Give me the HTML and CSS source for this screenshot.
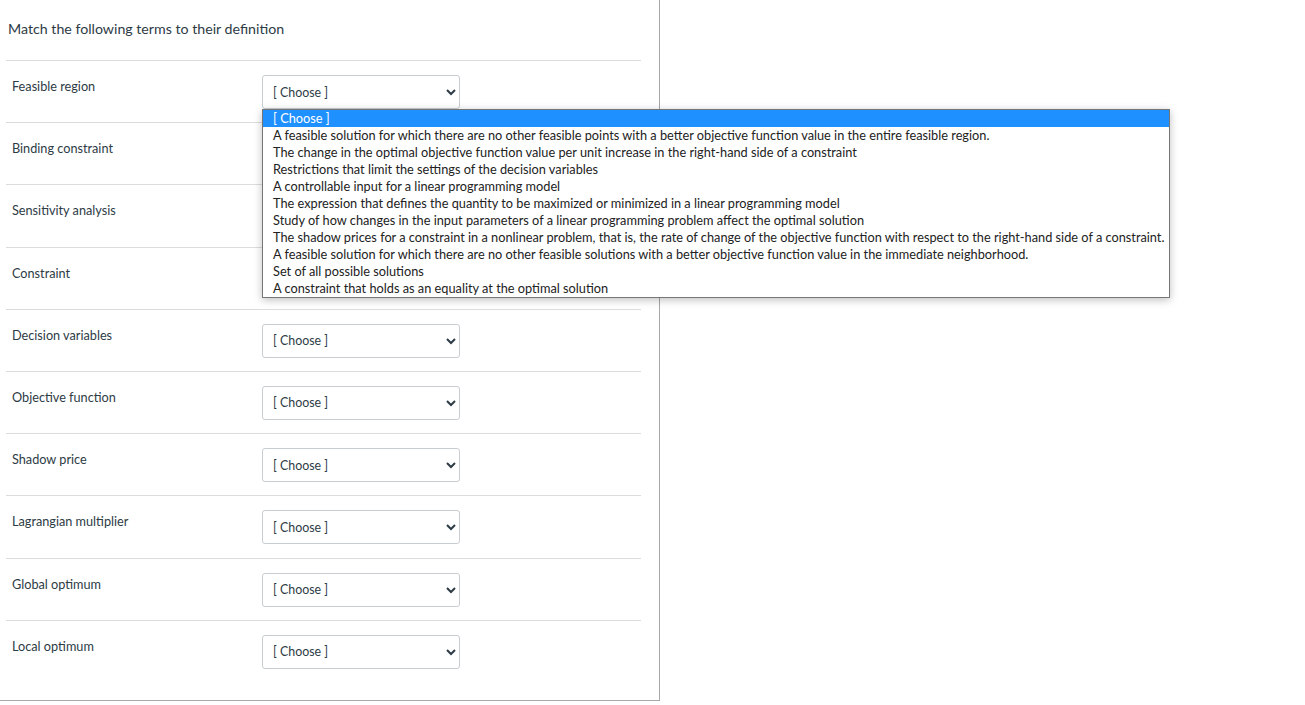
FILE: index.html
```html
<!DOCTYPE html>
<html lang="en">
<head>
    <meta charset="UTF-8">
    <meta name="viewport" content="width=device-width, initial-scale=1.0">
    <title>Matching Question</title>
    <link rel="stylesheet" href="styles.css">
</head>
<body>
    <div class="question">
        <div class="question-text">Match the following terms to their definition</div>

        <div class="answers">
            <div class="answer">
                <label class="term">Feasible region</label>
                <div class="picker">
                    <select class="choice"><option>[ Choose ]</option></select>
                </div>
            </div>
            <div class="answer">
                <label class="term">Binding constraint</label>
                <div class="picker">
                    <select class="choice"><option>[ Choose ]</option></select>
                </div>
            </div>
            <div class="answer">
                <label class="term">Sensitivity analysis</label>
                <div class="picker">
                    <select class="choice"><option>[ Choose ]</option></select>
                </div>
            </div>
            <div class="answer">
                <label class="term">Constraint</label>
                <div class="picker">
                    <select class="choice"><option>[ Choose ]</option></select>
                </div>
            </div>
            <div class="answer">
                <label class="term">Decision variables</label>
                <div class="picker">
                    <select class="choice"><option>[ Choose ]</option></select>
                </div>
            </div>
            <div class="answer">
                <label class="term">Objective function</label>
                <div class="picker">
                    <select class="choice"><option>[ Choose ]</option></select>
                </div>
            </div>
            <div class="answer">
                <label class="term">Shadow price</label>
                <div class="picker">
                    <select class="choice"><option>[ Choose ]</option></select>
                </div>
            </div>
            <div class="answer">
                <label class="term">Lagrangian multiplier</label>
                <div class="picker">
                    <select class="choice"><option>[ Choose ]</option></select>
                </div>
            </div>
            <div class="answer">
                <label class="term">Global optimum</label>
                <div class="picker">
                    <select class="choice"><option>[ Choose ]</option></select>
                </div>
            </div>
            <div class="answer">
                <label class="term">Local optimum</label>
                <div class="picker">
                    <select class="choice"><option>[ Choose ]</option></select>
                </div>
            </div>
        </div>
    </div>

    <!-- open list of the first dropdown -->
    <ul class="option-list">
        <li class="option selected">[ Choose ]</li>
        <li class="option">A feasible solution for which there are no other feasible points with a better objective function value in the entire feasible region.</li>
        <li class="option">The change in the optimal objective function value per unit increase in the right-hand side of a constraint</li>
        <li class="option">Restrictions that limit the settings of the decision variables</li>
        <li class="option">A controllable input for a linear programming model</li>
        <li class="option">The expression that defines the quantity to be maximized or minimized in a linear programming model</li>
        <li class="option">Study of how changes in the input parameters of a linear programming problem affect the optimal solution</li>
        <li class="option">The shadow prices for a constraint in a nonlinear problem, that is, the rate of change of the objective function with respect to the right-hand side of a constraint.</li>
        <li class="option">A feasible solution for which there are no other feasible solutions with a better objective function value in the immediate neighborhood.</li>
        <li class="option">Set of all possible solutions</li>
        <li class="option">A constraint that holds as an equality at the optimal solution</li>
    </ul>
</body>
</html>
```

FILE: styles.css
```css
body {
    margin: 0;
    font-family: Lato, "Liberation Sans", sans-serif;
    color: #2d3b45;
    background: #fff;
}

.question {
    box-sizing: border-box;
    width: 660px;
    height: 701px;
    border-right: 1px solid #a8a8a8;
    border-bottom: 1px solid #a8a8a8;
    padding: 0 18px 0 6px;
}

.question-text {
    font-size: 14.2px;
    line-height: 20px;
    padding: 19px 2px 21px;
}

.answer {
    display: flex;
    border-top: 1px solid #dcdcdc;
    padding: 14px 6px 13.2px;
}

.term {
    width: 250px;
    font-size: 12.7px;
    line-height: 18px;
    padding-top: 2px;
}

.choice {
    box-sizing: border-box;
    width: 198px;
    height: 34px;
    padding: 0 6px;
    font-family: Lato, "Liberation Sans", sans-serif;
    font-size: 12.4px;
    color: #2d3b45;
    background: #fff;
    border: 1px solid #c7cdd1;
    border-radius: 3px;
}

.option-list {
    position: absolute;
    left: 262px;
    top: 109px;
    box-sizing: border-box;
    width: 908px;
    height: 189px;
    margin: 0;
    padding: 0;
    list-style: none;
    background: #fff;
    border: 1px solid #767676;
    box-shadow: 0 2px 8px rgba(0, 0, 0, 0.25);
    font-size: 12.75px;
    line-height: 17px;
    color: #222;
}

.option {
    padding-left: 10px;
    white-space: nowrap;
}

.option.selected {
    background: #1e90ff;
    color: #fff;
}
```
